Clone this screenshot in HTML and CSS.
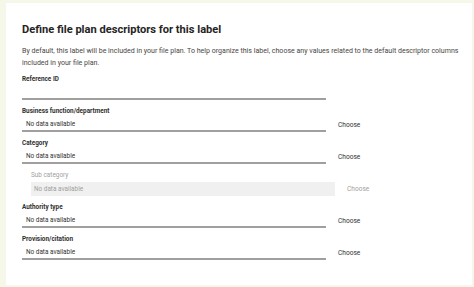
FILE: index.html
```html
<!DOCTYPE html>
<html lang="en">
<head>
  <meta charset="UTF-8" />
  <title>File plan descriptors</title>
  <link rel="stylesheet" href="styles.css">
</head>
<body>
  <div class="frame">
    <div class="panel">
      <h1>Define file plan descriptors for this label</h1>
      <p class="intro">By default, this label will be included in your file plan. To help organize this label, choose any values related to the default descriptor columns included in your file plan.</p>

      <div class="group">
        <div class="label">Reference ID</div>
        <div class="row">
          <div class="field"></div>
        </div>
      </div>

      <div class="group">
        <div class="label">Business function/department</div>
        <div class="row">
          <div class="field">No data available</div>
          <div class="choose">Choose</div>
        </div>
      </div>

      <div class="group">
        <div class="label">Category</div>
        <div class="row">
          <div class="field">No data available</div>
          <div class="choose">Choose</div>
        </div>
      </div>

      <div class="group sub">
        <div class="label">Sub category</div>
        <div class="row">
          <div class="field">No data available</div>
          <div class="choose">Choose</div>
        </div>
      </div>

      <div class="group">
        <div class="label">Authority type</div>
        <div class="row">
          <div class="field">No data available</div>
          <div class="choose">Choose</div>
        </div>
      </div>

      <div class="group">
        <div class="label">Provision/citation</div>
        <div class="row">
          <div class="field">No data available</div>
          <div class="choose">Choose</div>
        </div>
      </div>
    </div>
  </div>
</body>
</html>
```

FILE: styles.css
```css
* {
  margin: 0;
  padding: 0;
  box-sizing: border-box;
  font-family: Roboto, 'Noto Sans', sans-serif;
}

html, body {
  width: 100%;
  height: 100%;
  background-color: #f5f8e8;
  overflow: hidden;
}

.frame {
  width: 474px;
  height: 287px;
  padding: 3px 2px 2px 6px;
}

.panel {
  width: 100%;
  height: 100%;
  background-color: white;
  padding: 17px 0 0 16px;
  color: #323130;
}

h1 {
  font-size: 11.1px;
  font-weight: 700;
  line-height: 20px;
  color: #252423;
}

.intro {
  font-size: 7.05px;
  line-height: 12px;
  color: #484644;
  margin-top: 5px;
  margin-bottom: 4px;
}

.group {
  margin-bottom: 5px;
}

.label {
  font-size: 6.4px;
  font-weight: 700;
  line-height: 12px;
  color: #323130;
}

.row {
  display: flex;
  align-items: flex-end;
  margin-top: 1px;
}

.field {
  width: 304px;
  height: 14px;
  border-bottom: 2px solid #a19f9d;
  font-size: 6.4px;
  line-height: 12px;
  padding-left: 4px;
  color: #323130;
}

.choose {
  margin-left: 12px;
  font-size: 6.6px;
  line-height: 14px;
  color: #323130;
}

.sub {
  padding-left: 9px;
}

.sub .label {
  font-weight: 400;
  color: #a19f9d;
}

.sub .field {
  background-color: #f0f0f0;
  border-bottom: none;
  height: 14px;
  line-height: 14px;
  padding-left: 3px;
  color: #a19f9d;
}

.sub .choose {
  color: #a19f9d;
}
```
